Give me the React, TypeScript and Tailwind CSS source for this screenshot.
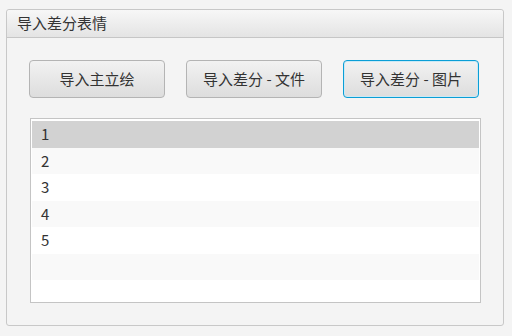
import React from 'react';

const font = { fontFamily: '"Noto Sans CJK SC", "Noto Sans", sans-serif' };

const rows = ['1', '2', '3', '4', '5', '', ''];

export default function App() {
  const [selected, setSelected] = React.useState(0);

  return (
    <div className="w-[512px] h-[336px] bg-[#f4f4f4] pt-[9px] pl-[6px]" style={font}>
      <div className="w-[498px] h-[317px] border border-[#c8c8c8] rounded-[3px] flex flex-col bg-[#f4f4f4]">
        {/* title bar */}
        <div className="h-[28px] flex items-center pl-[10px] bg-gradient-to-b from-[#f7f7f7] to-[#e4e4e4] border-b border-[#c6c6c6] rounded-t-[3px] text-[15px] text-[#333]">
          导入差分表情
        </div>

        <div className="flex flex-col pl-[22px] pt-[22px]">
          <div className="flex gap-[21px]">
            <button className="w-[136px] h-[38px] rounded-[4px] border border-[#b4b4b4] bg-gradient-to-b from-[#f2f2f2] to-[#dddddd] text-[15px] text-[#333]">
              导入主立绘
            </button>
            <button className="w-[136px] h-[38px] rounded-[4px] border border-[#b4b4b4] bg-gradient-to-b from-[#f2f2f2] to-[#dddddd] text-[15px] text-[#333] whitespace-pre">
              导入差分 - 文件
            </button>
            <button className="w-[136px] h-[38px] rounded-[4px] border border-[#0a9ed6] shadow-[inset_0_0_0_1px_#cbe9f5] bg-gradient-to-b from-[#f2f2f2] to-[#dddddd] text-[15px] text-[#333] whitespace-pre">
              导入差分 - 图片
            </button>
          </div>

          <div className="mt-[20px] ml-px w-[451px] h-[185px] border border-[#c4c4c4] bg-white px-px pt-[2px] overflow-hidden">
            {rows.map((r, i) => (
              <div
                key={i}
                onClick={() => r && setSelected(i)}
                className={`h-[26.5px] flex items-center pl-[9px] text-[15px] text-[#333] ${
                  i === selected ? 'bg-[#d2d2d2]' : i % 2 === 1 ? 'bg-[#f9f9f9]' : 'bg-white'
                }`}
              >
                {r}
              </div>
            ))}
          </div>
        </div>
      </div>
    </div>
  );
}
